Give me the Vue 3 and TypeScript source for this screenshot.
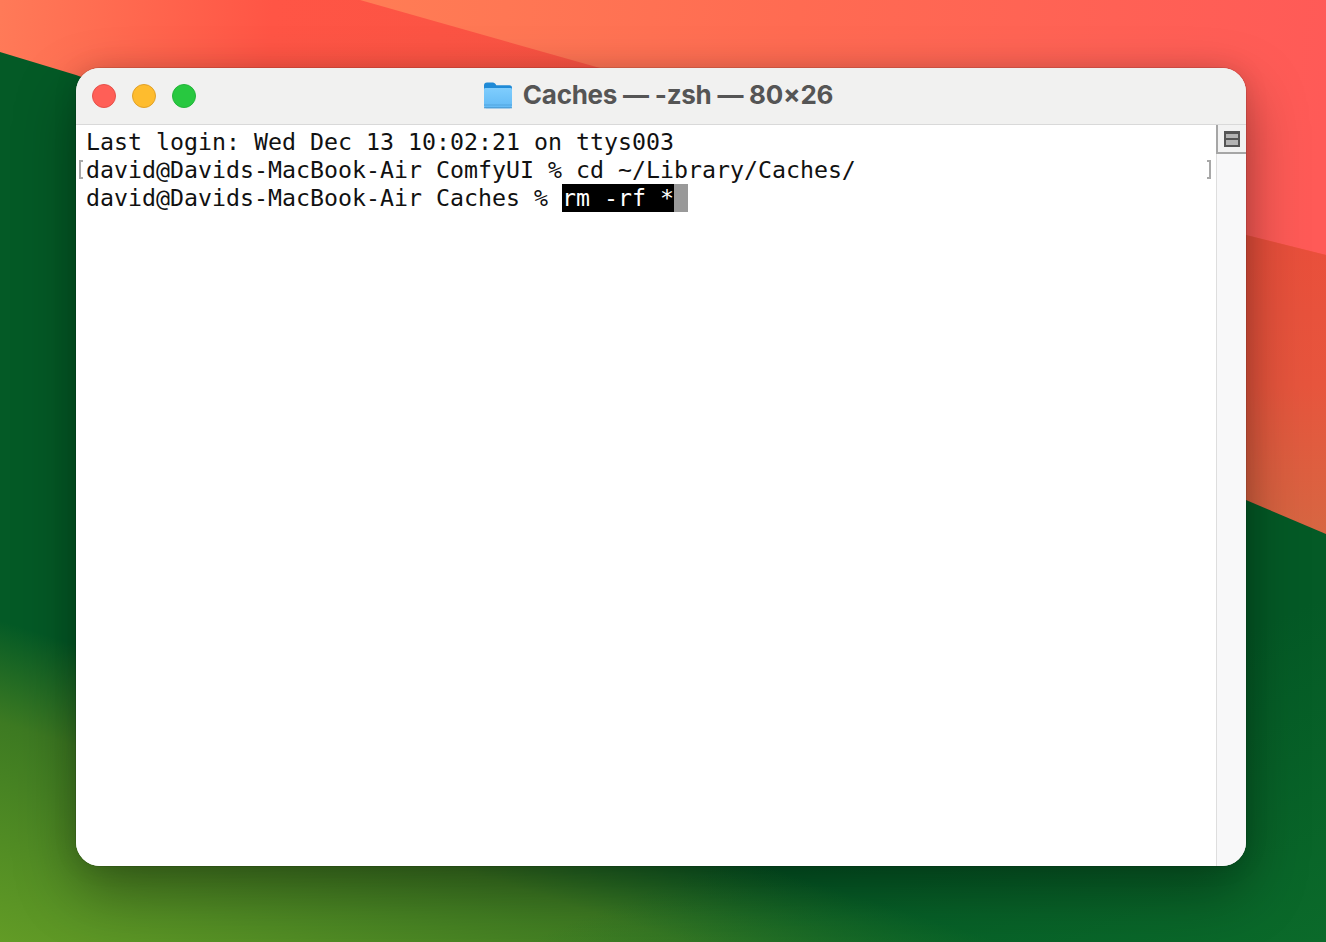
<script setup lang="ts">
const lines: string[] = [
  'Last login: Wed Dec 13 10:02:21 on ttys003',
  'david@Davids-MacBook-Air ComfyUI % cd ~/Library/Caches/',
]
const promptText = 'david@Davids-MacBook-Air Caches % '
const selected = 'rm -rf *'
</script>

<template>
  <div class="desktop">
    <svg class="wallpaper" viewBox="0 0 1326 942" width="1326" height="942" aria-hidden="true">
      <defs>
        <linearGradient id="topLeft" gradientUnits="userSpaceOnUse" x1="0" y1="20" x2="600" y2="70">
          <stop offset="0" stop-color="#ff7a58" />
          <stop offset="0.45" stop-color="#ff5545" />
          <stop offset="1" stop-color="#f95343" />
        </linearGradient>
        <linearGradient id="band" gradientUnits="userSpaceOnUse" x1="360" y1="0" x2="1326" y2="100">
          <stop offset="0" stop-color="#ff7d55" />
          <stop offset="0.45" stop-color="#ff6b52" />
          <stop offset="1" stop-color="#ff5a57" />
        </linearGradient>
        <linearGradient id="mid" gradientUnits="userSpaceOnUse" x1="1290" y1="240" x2="1290" y2="530">
          <stop offset="0" stop-color="#e94f3b" />
          <stop offset="0.5" stop-color="#e7553d" />
          <stop offset="1" stop-color="#d76642" />
        </linearGradient>
        <linearGradient id="green" gradientUnits="userSpaceOnUse" x1="0" y1="960" x2="99" y2="652">
          <stop offset="0" stop-color="#659e26" />
          <stop offset="0.7" stop-color="#3d7a22" />
          <stop offset="1" stop-color="#045a26" />
        </linearGradient>
        <linearGradient id="greenRight" gradientUnits="userSpaceOnUse" x1="1200" y1="650" x2="1326" y2="942">
          <stop offset="0" stop-color="#0b6a2a" stop-opacity="0" />
          <stop offset="1" stop-color="#0b6a2a" />
        </linearGradient>
      </defs>
      <rect width="1326" height="942" fill="url(#topLeft)" />
      <polygon points="360,0 1326,0 1326,255 1246,235 600,68" fill="url(#band)" />
      <polygon points="1246,235 1326,255 1326,534 1246,500" fill="url(#mid)" />
      <polygon points="0,52 76,75 1246,500 1326,534 1326,942 0,942" fill="url(#green)" />
      <polygon points="0,52 76,75 1246,500 1326,534 1326,942 0,942" fill="url(#greenRight)" />
    </svg>

    <main class="window">
      <header class="titlebar">
        <div class="lights">
          <span class="light red"></span>
          <span class="light yellow"></span>
          <span class="light green"></span>
        </div>
        <div class="title">
          <svg class="folder" viewBox="0 0 30 28" width="30" height="28" aria-hidden="true">
            <defs>
              <linearGradient id="folderFront" x1="0" y1="0" x2="0" y2="1">
                <stop offset="0" stop-color="#7fcdfd" />
                <stop offset="1" stop-color="#62baf5" />
              </linearGradient>
            </defs>
            <path d="M1 4.5 Q1 1.5 4 1.5 H10 Q11.5 1.5 12.5 3 L13.3 4.2 H26.5 Q29 4.2 29 7 V14 H1 Z" fill="#1f8ad6" />
            <path d="M1 8.4 Q1 7 2.6 7 H27.4 Q29 7 29 8.4 V25 Q29 27.3 26.7 27.3 H3.3 Q1 27.3 1 25 Z" fill="url(#folderFront)" />
            <rect x="1" y="23.5" width="28" height="1" fill="#52a6e0" />
            <rect x="1" y="26.2" width="28" height="1.1" fill="#4b9ad3" />
          </svg>
          <span class="title-text">Caches — -zsh — 80×26</span>
        </div>
      </header>

      <div class="body">
        <section class="terminal">
          <div v-for="(line, i) in lines" :key="i" class="row">
            <span v-if="i === 1" class="mark mark-left"></span>{{ line }}<span v-if="i === 1" class="mark mark-right"></span>
          </div>
          <div class="row">{{ promptText }}<span class="selection">{{ selected }}</span><span class="cursor"></span></div>
        </section>
        <aside class="scrollbar">
          <div class="split">
            <span class="split-icon"><i></i><i></i></span>
          </div>
        </aside>
      </div>
    </main>
  </div>
</template>

<style>
html,
body {
  margin: 0;
  background: #045a26;
}
</style>

<style scoped>
.desktop {
  position: relative;
  width: 1326px;
  height: 942px;
  box-sizing: border-box;
  padding: 68px 80px 76px 76px;
  overflow: hidden;
}

.wallpaper {
  position: absolute;
  inset: 0;
  display: block;
}

.window {
  position: relative;
  display: flex;
  flex-direction: column;
  height: 798px;
  border-radius: 24px;
  overflow: hidden;
  background: #fff;
  box-shadow: 0 0 0 1px rgba(0, 0, 0, 0.1), 0 24px 60px rgba(0, 0, 0, 0.36), 0 0 24px rgba(0, 0, 0, 0.1);
}

.titlebar {
  position: relative;
  flex: none;
  height: 57px;
  box-sizing: border-box;
  padding-bottom: 2px;
  display: flex;
  align-items: center;
  justify-content: center;
  background: #f1f1f0;
  border-bottom: 1px solid #d9d9d9;
}

.lights {
  position: absolute;
  left: 16px;
  top: 16px;
  display: flex;
  gap: 16px;
}

.light {
  width: 24px;
  height: 24px;
  box-sizing: border-box;
  border-radius: 50%;
  border: 1px solid;
}

.red {
  background: #ff5f57;
  border-color: #e5504a;
}

.yellow {
  background: #febc2e;
  border-color: #e0a028;
}

.green {
  background: #28c840;
  border-color: #24b43a;
}

.title {
  display: flex;
  align-items: center;
  gap: 10px;
  margin-left: -6px;
}

.folder {
  display: block;
  flex: none;
}

.title-text {
  font-family: Inter, "Liberation Sans", sans-serif;
  font-size: 26px;
  font-weight: 700;
  letter-spacing: -0.25px;
  line-height: 32px;
  color: #555;
  white-space: nowrap;
}

.body {
  flex: 1;
  display: flex;
  min-height: 0;
}

.terminal {
  flex: 1;
  padding: 3px 0 0 10px;
  background: #fff;
  font-family: "DejaVu Sans Mono", "Liberation Mono", monospace;
  font-size: 23.25px;
  color: #111;
}

.row {
  position: relative;
  height: 28px;
  line-height: 28px;
  white-space: pre;
}

.mark {
  position: absolute;
  top: 4px;
  width: 4px;
  height: 19px;
  box-sizing: border-box;
  border: 2px solid #a8a8a8;
}

.mark-left {
  left: -7px;
  border-right: 0;
}

.mark-right {
  left: 1121px;
  border-left: 0;
}

.selection {
  display: inline-block;
  height: 28px;
  vertical-align: top;
  background: #000;
  color: #fff;
}

.cursor {
  display: inline-block;
  width: 14px;
  height: 28px;
  vertical-align: top;
  background: #999;
}

.scrollbar {
  flex: none;
  width: 30px;
  box-sizing: border-box;
  background: #f8f8f9;
  border-left: 1px solid #dedede;
}

.split {
  height: 29px;
  margin-left: -1px;
  display: flex;
  align-items: center;
  justify-content: center;
  box-sizing: border-box;
  background: #f2f2f2;
  border-left: 2px solid #a6a6a6;
  border-bottom: 2px solid #a6a6a6;
}

.split-icon {
  flex: none;
  width: 16px;
  height: 16px;
  box-sizing: border-box;
  padding: 3px 2px 2px;
  display: flex;
  flex-direction: column;
  gap: 2px;
  background: #555;
}

.split-icon i {
  flex: 1;
  background: #b4b4b4;
}
</style>
